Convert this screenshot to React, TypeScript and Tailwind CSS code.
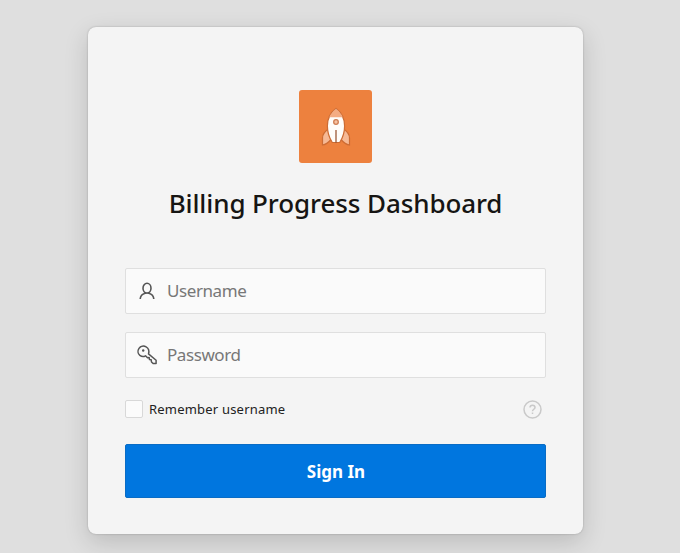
import type { InputHTMLAttributes, ReactNode } from 'react';

function RocketIcon() {
    return (
        <svg width="32" height="42" viewBox="0 0 32 42" fill="none">
            <path
                d="M9 22.500c-3.800 2.500-6.500 5.500-6.500 9.500V39c3-.3 6-2.500 8.500-5.500M23 22.500c3.800 2.500 6.500 5.500 6.500 9.500V39c-3-.3-6-2.500-8.500-5.500"
                fill="#f6b995"
                stroke="#cd6c34"
                strokeWidth="1.200"
            />
            <path
                d="M16 2.500c5.500 4 8.600 9.800 8.600 17.500 0 6.500-1.600 11.500-4.900 16.500h-7.400C9 31.500 7.400 26.500 7.400 20 7.400 12.300 10.500 6.500 16 2.500Z"
                fill="#fffdfa"
                stroke="#cd6c34"
                strokeWidth="1.200"
            />
            <path d="M16 3c3 2.200 5.300 4.900 6.700 8.200H9.300C10.700 7.900 13 5.200 16 3Z" fill="#f4ac83" />
            <circle cx="16" cy="16" r="2.300" fill="#f6c3a3" stroke="#cf7c50" strokeWidth="1.300" />
            <path d="M16 24V37" stroke="#9b5a38" strokeWidth="1.300" />
        </svg>
    );
}

function UserIcon() {
    return (
        <svg
            className="-ml-0.5"
            width="16"
            height="18"
            viewBox="0 0 16 18"
            fill="none"
            stroke="#555"
            strokeWidth="1.600"
        >
            <ellipse cx="8" cy="6.200" rx="4" ry="4.900" />
            <path d="M1.200 17c.2-2.900 1.800-4.800 5-5.700v-1M14.800 17c-.2-2.900-1.800-4.800-5-5.700v-1" />
        </svg>
    );
}

function KeyIcon() {
    return (
        <svg
            className="-ml-0.5"
            width="20"
            height="20"
            viewBox="0 0 20 20"
            fill="none"
            stroke="#555"
            strokeWidth="1.500"
            strokeLinejoin="round"
        >
            <path d="M11.500 8.900c.8-2.800-.1-5.800-2.400-7.100C6.700.5 3.600 1.100 2 3.400.4 5.700.8 8.700 2.900 10.400c1.700 1.300 3.900 1.400 5.600.4l2 1.900 1.700-.1.300 2 1.700.2.300 2.200 1.600 1.500h3v-3.200l-7.600-6.400Z" />
            <circle cx="6.200" cy="5.500" r="1.200" fill="#555" stroke="none" />
        </svg>
    );
}

interface FieldProps extends InputHTMLAttributes<HTMLInputElement> {
    icon: ReactNode;
}

function Field({ icon, ...props }: FieldProps) {
    return (
        <label className="flex h-[46px] w-full items-center rounded-[2px] border border-[#dfdfdf] bg-[#fafafa] pl-3">
            <span className="flex w-5 shrink-0 justify-center">{icon}</span>
            <input
                className="ml-[9px] min-w-0 flex-1 bg-transparent text-[17px] tracking-[-0.42px] text-[#161513] outline-none placeholder:text-[#777]"
                {...props}
            />
        </label>
    );
}

export default function App() {
    return (
        <main className="flex h-[553px] justify-center overflow-hidden bg-[#dfdfdf] pt-[27px] pr-[9px] font-['Noto_Sans',sans-serif]">
            <form
                className="flex h-[507px] w-[495px] flex-col items-center rounded-lg bg-[#f4f4f4] px-[37px] pt-[63px] shadow-[0_0_2px_rgba(0,0,0,0.25),0_8px_24px_rgba(0,0,0,0.16)]"
                onSubmit={(event) => event.preventDefault()}
            >
                <div className="flex h-[73px] w-[73px] items-center justify-center rounded-[3px] bg-[#ed813e]">
                    <RocketIcon />
                </div>
                <h1 className="mt-[21px] text-[26px] leading-[38px] font-medium tracking-[-0.1px] whitespace-nowrap text-[#161513]">
                    Billing Progress Dashboard
                </h1>

                <div className="mt-[46px] flex w-full flex-col gap-[18px]">
                    <Field icon={<UserIcon />} placeholder="Username" autoComplete="username" />
                    <Field icon={<KeyIcon />} placeholder="Password" type="password" />
                </div>

                <div className="mt-[22px] flex h-[18px] w-full items-center justify-between">
                    <label className="flex items-center text-[13px] leading-[18px] tracking-[0.2px] text-[#222]">
                        <input
                            type="checkbox"
                            className="mr-1.5 h-[18px] w-[18px] appearance-none rounded-[2px] border border-[#d8d8d8] bg-[#fbfbfb] checked:bg-[#0076df]"
                        />
                        Remember username
                    </label>
                    <button type="button" className="mr-1" aria-label="Help">
                        <svg
                            width="19"
                            height="19"
                            viewBox="0 0 19 19"
                            fill="none"
                            stroke="#c9c9c9"
                            strokeWidth="1.500"
                        >
                            <circle cx="9.500" cy="9.500" r="8.500" />
                            <path d="M7 7.500c0-1.500 1-2.300 2.500-2.300S12 6.100 12 7.500c0 1.700-2.500 1.800-2.500 3.700M9.500 12.600v1.400" />
                        </svg>
                    </button>
                </div>

                <button
                    type="submit"
                    className="mt-[26px] h-[54px] w-full rounded-[2px] border border-[#096cc5] bg-[#0076df] pt-0.5 pl-px text-[17px] font-bold text-white"
                >
                    Sign In
                </button>
            </form>
        </main>
    );
}
